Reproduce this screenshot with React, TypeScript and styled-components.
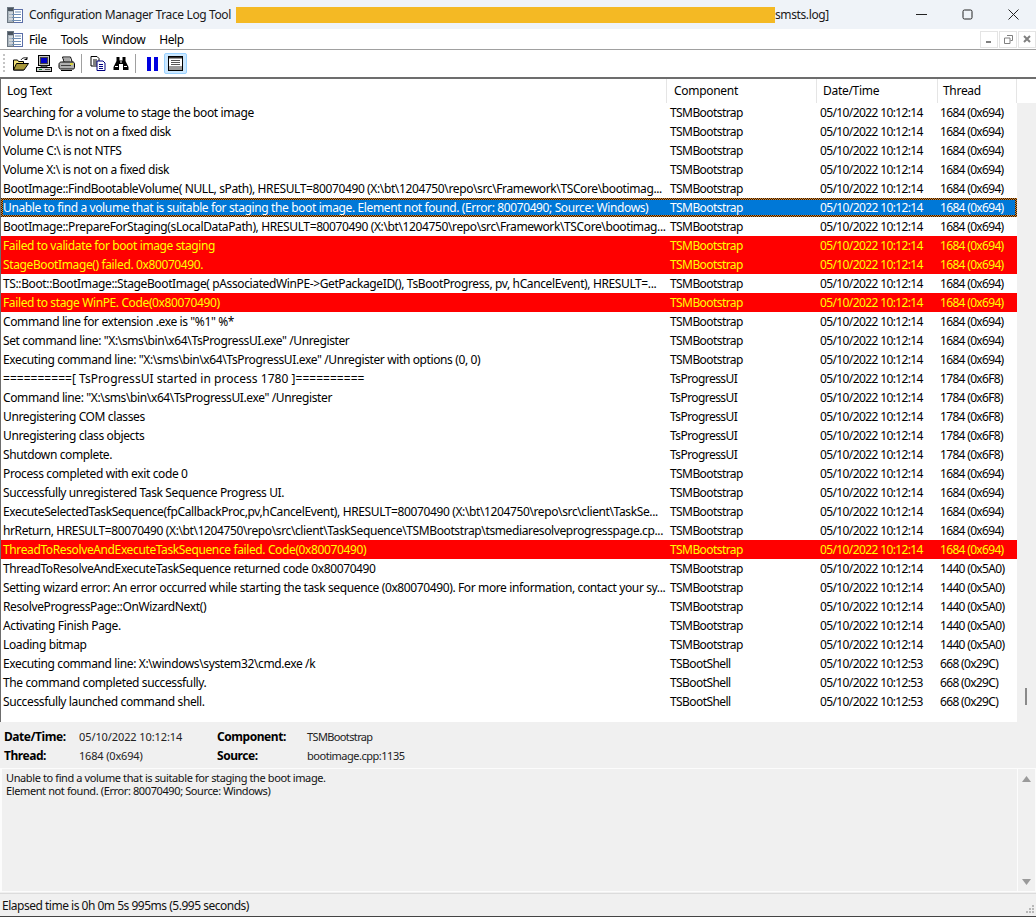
import styled, { createGlobalStyle } from 'styled-components';

const GlobalStyle = createGlobalStyle`
  html, body {
    margin: 0;
    padding: 0;
    background: #f0f0f0;
  }
`;

type Level = 'normal' | 'selected' | 'error';
type Entry = { text: string; comp: string; time: string; thread: string; level?: Level; spacing?: number };

const boot = '05/10/2022 10:12:14';
const shell = '05/10/2022 10:12:53';
const t1 = '1684 (0x694)';
const t2 = '1784 (0x6F8)';
const t3 = '1440 (0x5A0)';
const t4 = '668 (0x29C)';

const rows: Entry[] = [
  { text: 'Searching for a volume to stage the boot image', comp: 'TSMBootstrap', time: boot, thread: t1 },
  { text: 'Volume D:\\ is not on a fixed disk', comp: 'TSMBootstrap', time: boot, thread: t1 },
  { text: 'Volume C:\\ is not NTFS', comp: 'TSMBootstrap', time: boot, thread: t1 },
  { text: 'Volume X:\\ is not on a fixed disk', comp: 'TSMBootstrap', time: boot, thread: t1 },
  { text: 'BootImage::FindBootableVolume( NULL, sPath), HRESULT=80070490 (X:\\bt\\1204750\\repo\\src\\Framework\\TSCore\\bootimag...', comp: 'TSMBootstrap', time: boot, thread: t1 },
  { text: 'Unable to find a volume that is suitable for staging the boot image. Element not found. (Error: 80070490; Source: Windows)', comp: 'TSMBootstrap', time: boot, thread: t1, level: 'selected' },
  { text: 'BootImage::PrepareForStaging(sLocalDataPath), HRESULT=80070490 (X:\\bt\\1204750\\repo\\src\\Framework\\TSCore\\bootimag...', comp: 'TSMBootstrap', time: boot, thread: t1 },
  { text: 'Failed to validate for boot image staging', comp: 'TSMBootstrap', time: boot, thread: t1, level: 'error' },
  { text: 'StageBootImage() failed. 0x80070490.', comp: 'TSMBootstrap', time: boot, thread: t1, level: 'error' },
  { text: 'TS::Boot::BootImage::StageBootImage( pAssociatedWinPE->GetPackageID(), TsBootProgress, pv, hCancelEvent), HRESULT=...', comp: 'TSMBootstrap', time: boot, thread: t1 },
  { text: 'Failed to stage WinPE. Code(0x80070490)', comp: 'TSMBootstrap', time: boot, thread: t1, level: 'error' },
  { text: 'Command line for extension .exe is "%1" %*', comp: 'TSMBootstrap', time: boot, thread: t1 },
  { text: 'Set command line: "X:\\sms\\bin\\x64\\TsProgressUI.exe" /Unregister', comp: 'TSMBootstrap', time: boot, thread: t1 },
  { text: 'Executing command line: "X:\\sms\\bin\\x64\\TsProgressUI.exe" /Unregister with options (0, 0)', comp: 'TSMBootstrap', time: boot, thread: t1 },
  { text: '==========[ TsProgressUI started in process 1780 ]==========', comp: 'TsProgressUI', time: boot, thread: t2, spacing: 0.03 },
  { text: 'Command line: "X:\\sms\\bin\\x64\\TsProgressUI.exe" /Unregister', comp: 'TsProgressUI', time: boot, thread: t2 },
  { text: 'Unregistering COM classes', comp: 'TsProgressUI', time: boot, thread: t2 },
  { text: 'Unregistering class objects', comp: 'TsProgressUI', time: boot, thread: t2 },
  { text: 'Shutdown complete.', comp: 'TsProgressUI', time: boot, thread: t2 },
  { text: 'Process completed with exit code 0', comp: 'TSMBootstrap', time: boot, thread: t1 },
  { text: 'Successfully unregistered Task Sequence Progress UI.', comp: 'TSMBootstrap', time: boot, thread: t1 },
  { text: 'ExecuteSelectedTaskSequence(fpCallbackProc,pv,hCancelEvent), HRESULT=80070490 (X:\\bt\\1204750\\repo\\src\\client\\TaskSe...', comp: 'TSMBootstrap', time: boot, thread: t1 },
  { text: 'hrReturn, HRESULT=80070490 (X:\\bt\\1204750\\repo\\src\\client\\TaskSequence\\TSMBootstrap\\tsmediaresolveprogresspage.cp...', comp: 'TSMBootstrap', time: boot, thread: t1 },
  { text: 'ThreadToResolveAndExecuteTaskSequence failed. Code(0x80070490)', comp: 'TSMBootstrap', time: boot, thread: t1, level: 'error' },
  { text: 'ThreadToResolveAndExecuteTaskSequence returned code 0x80070490', comp: 'TSMBootstrap', time: boot, thread: t3 },
  { text: 'Setting wizard error: An error occurred while starting the task sequence (0x80070490). For more information, contact your sy...', comp: 'TSMBootstrap', time: boot, thread: t3 },
  { text: 'ResolveProgressPage::OnWizardNext()', comp: 'TSMBootstrap', time: boot, thread: t3 },
  { text: 'Activating Finish Page.', comp: 'TSMBootstrap', time: boot, thread: t3 },
  { text: 'Loading bitmap', comp: 'TSMBootstrap', time: boot, thread: t3 },
  { text: 'Executing command line: X:\\windows\\system32\\cmd.exe /k', comp: 'TSBootShell', time: shell, thread: t4 },
  { text: 'The command completed successfully.', comp: 'TSBootShell', time: shell, thread: t4 },
  { text: 'Successfully launched command shell.', comp: 'TSBootShell', time: shell, thread: t4 },
];

const Window = styled.div`
  width: 1036px;
  height: 917px;
  display: flex;
  flex-direction: column;
  overflow: hidden;
  background: #f0f0f0;
  font-family: 'Noto Sans', 'Open Sans', sans-serif;
  font-size: 12px;
  letter-spacing: -0.38px;
  color: #000;
`;

const TitleBar = styled.div`
  height: 29px;
  flex: none;
  display: flex;
  align-items: center;
  background: #eff3f8;
  padding-left: 7px;
  gap: 6px;
`;

const TitleText = styled.span`
  display: flex;
  align-items: center;
  color: #1a1a1a;
`;

const Redacted = styled.span`
  display: inline-block;
  width: 539px;
  height: 16px;
  margin-left: 5px;
  background: #f4b924;
`;

const WindowButtons = styled.div`
  margin-left: auto;
  display: flex;
  align-items: center;
  height: 100%;
`;

const WindowButton = styled.div`
  width: 46px;
  height: 29px;
  display: flex;
  align-items: center;
  justify-content: center;
`;

const MenuBar = styled.div`
  height: 20px;
  flex: none;
  display: flex;
  align-items: center;
  background: #fff;
  padding-left: 7px;
  border-bottom: 1px solid #a0a0a0;
`;

const MenuItem = styled.span`
  margin-right: 14px;
  &:first-of-type {
    margin-left: 6px;
  }
`;

const MdiButtons = styled.div`
  margin-left: auto;
  display: flex;
  gap: 1px;
`;

const MdiButton = styled.div`
  width: 18px;
  height: 17px;
  border: 1px solid #e4e4e4;
  box-sizing: border-box;
  display: flex;
  align-items: center;
  justify-content: center;
`;

const ToolBar = styled.div`
  height: 29px;
  flex: none;
  display: flex;
  align-items: center;
  background: #fff;
  padding-left: 3px;
  border-bottom: 2px solid #6d6d6d;
  box-sizing: border-box;
`;

const Grip = styled.div`
  width: 2px;
  height: 20px;
  margin-right: 4px;
  background: repeating-linear-gradient(to bottom, #c4c4c4 0 2px, transparent 2px 4px);
`;

const ToolButton = styled.div<{ $active?: boolean }>`
  width: 23px;
  height: 21px;
  display: flex;
  align-items: center;
  justify-content: center;
  box-sizing: border-box;
  border-radius: 2px;
  ${(p) => p.$active && 'background: #cce8ff; border: 1px solid #99d1ff;'}
`;

const ToolSep = styled.div<{ $after: number }>`
  width: 1px;
  height: 19px;
  margin: 0 ${(p) => p.$after}px 0 3px;
  background: #a0a0a0;
`;

const LogArea = styled.div`
  height: 643px;
  flex: none;
  display: grid;
  grid-template-columns: 1017px 19px;
  background: #f0f0f0;
`;

const LogList = styled.div`
  background: #fff;
  display: flex;
  flex-direction: column;
  border-left: 1px solid #6d6d6d;
`;

const columns = 'grid-template-columns: 666px 150px 121px 79px;';

const HeaderRow = styled.div`
  display: grid;
  ${columns}
  height: 24px;
  flex: none;
`;

const HeaderCell = styled.div<{ $indent: number }>`
  display: flex;
  align-items: center;
  padding: 0 0 2px ${(p) => p.$indent}px;
  border-right: 1px solid #e5e5e5;
  letter-spacing: -0.3px;
`;

const selectedBackground = `
  background:
    linear-gradient(#0078d7, #0078d7) center / calc(100% - 4px) calc(100% - 4px) no-repeat,
    repeating-conic-gradient(#e8871e 0 25%, #1a1a1a 0 50%) 0 0 / 2px 2px;
`;

const Row = styled.div<{ $level: Level }>`
  display: grid;
  ${columns}
  height: 19px;
  line-height: 19px;
  flex: none;
  white-space: nowrap;
  background: ${(p) => (p.$level === 'error' ? '#ff0000' : '#fff')};
  color: ${(p) => (p.$level === 'error' ? '#ffff00' : p.$level === 'selected' ? '#fff' : '#000')};
  ${(p) => p.$level === 'selected' && selectedBackground}
`;

const Cell = styled.div<{ $indent: number; $spacing?: number }>`
  padding-left: ${(p) => p.$indent}px;
  overflow: hidden;
  ${(p) => p.$spacing !== undefined && `letter-spacing: ${p.$spacing}px;`}
`;

const ScrollTrack = styled.div`
  position: relative;
  background: #f0f0f0;
  border-top: 24px solid #fff;
`;

const ScrollThumb = styled.div`
  position: absolute;
  right: 9px;
  top: 585px;
  width: 2px;
  height: 17px;
  background: #8a8a8a;
`;

const Details = styled.div`
  height: 46px;
  flex: none;
  display: grid;
  grid-template-columns: 75px 138px 90px 1fr;
  grid-auto-rows: 19px;
  align-items: center;
  padding: 5px 0 0 4px;
  box-sizing: border-box;
  background: #f0f0f0;
`;

const DetailLabel = styled.span`
  font-weight: 700;
  letter-spacing: -0.45px;
`;

const DetailValue = styled.span<{ $spacing: number }>`
  color: #222;
  font-size: 11px;
  letter-spacing: ${(p) => p.$spacing}px;
`;

const MessageBox = styled.div`
  height: 124px;
  flex: none;
  display: flex;
  background: #f0f0f0;
  border: 1px solid #fcfcfc;
  border-left-width: 2px;
  box-sizing: border-box;
`;

const MessageText = styled.div`
  flex: 1;
  padding: 2px 0 0 4px;
  font-size: 11px;
  letter-spacing: -0.39px;
  line-height: 13px;
  color: #111;
`;

const MessageScroll = styled.div`
  width: 18px;
  display: flex;
  flex-direction: column;
  justify-content: space-between;
  align-items: center;
  padding: 7px 0 6px;
  box-sizing: border-box;
  border-left: 1px solid #fcfcfc;
`;

const StatusBar = styled.div`
  flex: 1;
  display: flex;
  align-items: center;
  padding: 1px 0 0 2px;
  border-top: 1px solid #dcdcdc;
  border-bottom: 1px solid #444;
  margin-top: 1px;
  letter-spacing: -0.49px;
  color: #111;
  position: relative;
`;

const ResizeGrip = styled.svg`
  position: absolute;
  right: 1px;
  bottom: 1px;
`;

const LogIcon = () => (
  <svg width="16" height="16" viewBox="0 0 16 16">
    <rect x="5.500" y="2.500" width="10" height="13" fill="#fff" stroke="#5a6ea8" />
    <rect x="0.500" y="0.500" width="6" height="15" fill="#a9b4bd" stroke="#6c7782" />
    <rect x="1" y="1" width="5" height="3" fill="#4a545e" />
    <path d="M2 6h4M2 9h4M2 12h4" stroke="#f4f6f8" />
    <path d="M5 7.500h9M5 10.500h9M5 13.500h9M8 5h6" stroke="#6f8fb5" />
  </svg>
);

const FolderIcon = () => (
  <svg width="16" height="14" viewBox="0 0 16 14">
    <path d="M.5 3h4l1 1.500h5V13H.5z" fill="#f2e27a" stroke="#000" />
    <path d="M.5 13l3-6.500h12L11 13z" fill="#a8983a" stroke="#000" />
    <path d="M8 3c1-2 4-3 6-1.500M14 0v2.500h-2.500" fill="none" stroke="#000" />
  </svg>
);

const ComputerIcon = () => (
  <svg width="16" height="17" viewBox="0 0 16 17">
    <rect x="2.500" y="0.500" width="11" height="10" fill="#c4c4c4" stroke="#000" />
    <rect x="4.500" y="2.500" width="7" height="6" fill="#0000c8" stroke="#444" />
    <path d="M5 10.500h6v1.500H5z" fill="#808080" stroke="#000" strokeWidth=".6" />
    <rect x="0.500" y="12.500" width="15" height="4" fill="#d0d0d0" stroke="#000" />
    <path d="M3 14.500h3" stroke="#0a8a2a" />
    <path d="M9 14.500h5" stroke="#555" />
  </svg>
);

const PrinterIcon = () => (
  <svg width="17" height="16" viewBox="0 0 17 16">
    <path d="M4.500 1h8l2 6h-8z" fill="#fff" stroke="#000" />
    <path d="M6 3h6M6.500 5h6" stroke="#555" />
    <path d="M1 8.500c0-1.500 1-2.500 2.500-2.500H15c1 0 1.500 1 1.500 2v3.500c0 1-.5 1.500-1.500 1.500H2.500C1.500 13 1 12 1 11z" fill="#b0b0b0" stroke="#000" />
    <path d="M3 9.500h10" stroke="#404040" />
    <path d="M12 8h3" stroke="#e8e020" strokeWidth="1.500" />
    <path d="M3 14.500h11" stroke="#000" />
  </svg>
);

const CopyIcon = () => (
  <svg width="16" height="15" viewBox="0 0 16 15">
    <path d="M1 .5h6l2 2V10H1z" fill="#fff" stroke="#000" />
    <path d="M3 4h4M3 6h4M3 8h4" stroke="#000" />
    <path d="M7 5h6l2 2v7.500H7z" fill="#fff" stroke="#000080" />
    <path d="M9 8.500h4M9 10.500h4M9 12.500h4" stroke="#000080" />
  </svg>
);

const BinocularsIcon = () => (
  <svg width="16" height="15" viewBox="0 0 16 15">
    <path d="M3.500 1h3v3.500h3V1h3v4l3 6v3H10V8H6v6H.5v-3l3-6z" fill="#000" />
    <path d="M2 10.500h3M11 10.500h3M7 6h2" stroke="#fff" />
  </svg>
);

const PauseIcon = () => (
  <svg width="11" height="14" viewBox="0 0 11 14">
    <path d="M0 0h4v14H0zM7 0h4v14H7z" fill="#0000e0" />
  </svg>
);

const DetailsIcon = () => (
  <svg width="15" height="15" viewBox="0 0 15 15">
    <rect x="0.500" y="0.500" width="14" height="14" fill="#fff" stroke="#000" />
    <rect x="1" y="1" width="13" height="1.500" fill="#333" />
    <path d="M3 4.500h9M3 6.500h9M3 8.500h9" stroke="#555" />
    <rect x="1" y="10" width="13" height="4" fill="#999" />
  </svg>
);

const Triangle = ({ down }: { down?: boolean }) => (
  <svg width="9" height="6" viewBox="0 0 9 6">
    <path d={down ? 'M0 0h9L4.500 6z' : 'M4.500 0L9 6H0z'} fill="#9a9a9a" />
  </svg>
);

const App = () => (
  <Window>
    <GlobalStyle />
    <TitleBar>
      <LogIcon />
      <TitleText>
        Configuration Manager Trace Log Tool
        <Redacted />
        smsts.log]
      </TitleText>
      <WindowButtons>
        <WindowButton>
          <svg width="11" height="11" viewBox="0 0 11 11"><path d="M0 5.500h11" stroke="#222" /></svg>
        </WindowButton>
        <WindowButton>
          <svg width="11" height="11" viewBox="0 0 11 11"><rect x="1" y="1" width="9" height="9" rx="1.500" fill="none" stroke="#222" /></svg>
        </WindowButton>
        <WindowButton>
          <svg width="11" height="11" viewBox="0 0 11 11"><path d="M.5.500l10 10M10.500.500l-10 10" stroke="#222" /></svg>
        </WindowButton>
      </WindowButtons>
    </TitleBar>
    <MenuBar>
      <LogIcon />
      <MenuItem>File</MenuItem>
      <MenuItem>Tools</MenuItem>
      <MenuItem>Window</MenuItem>
      <MenuItem>Help</MenuItem>
      <MdiButtons>
        <MdiButton>
          <svg width="8" height="8" viewBox="0 0 8 8"><path d="M1 7h5" stroke="#808080" strokeWidth="2" /></svg>
        </MdiButton>
        <MdiButton>
          <svg width="9" height="9" viewBox="0 0 9 9"><path d="M3 .5h5.500v5H6.500M.5 3h5.500v5.500H.5z" fill="none" stroke="#808080" /></svg>
        </MdiButton>
        <MdiButton>
          <svg width="8" height="8" viewBox="0 0 8 8"><path d="M1 1l6 6M7 1L1 7" stroke="#808080" strokeWidth="2" /></svg>
        </MdiButton>
      </MdiButtons>
    </MenuBar>
    <ToolBar>
      <Grip />
      <ToolButton><FolderIcon /></ToolButton>
      <ToolButton><ComputerIcon /></ToolButton>
      <ToolButton><PrinterIcon /></ToolButton>
      <ToolSep $after={4} />
      <ToolButton><CopyIcon /></ToolButton>
      <ToolButton><BinocularsIcon /></ToolButton>
      <ToolSep $after={5} />
      <ToolButton><PauseIcon /></ToolButton>
      <ToolButton $active><DetailsIcon /></ToolButton>
    </ToolBar>
    <LogArea>
      <LogList>
        <HeaderRow>
          <HeaderCell $indent={6}>Log Text</HeaderCell>
          <HeaderCell $indent={7}>Component</HeaderCell>
          <HeaderCell $indent={6}>Date/Time</HeaderCell>
          <HeaderCell $indent={5}>Thread</HeaderCell>
        </HeaderRow>
        {rows.map((r, i) => (
          <Row key={i} $level={r.level ?? 'normal'}>
            <Cell $indent={2} $spacing={r.spacing}>{r.text}</Cell>
            <Cell $indent={3} $spacing={-0.58}>{r.comp}</Cell>
            <Cell $indent={3} $spacing={-0.62}>{r.time}</Cell>
            <Cell $indent={2} $spacing={-0.67}>{r.thread}</Cell>
          </Row>
        ))}
      </LogList>
      <ScrollTrack>
        <ScrollThumb />
      </ScrollTrack>
    </LogArea>
    <Details>
      <DetailLabel>Date/Time:</DetailLabel>
      <DetailValue $spacing={-0.1}>05/10/2022 10:12:14</DetailValue>
      <DetailLabel>Component:</DetailLabel>
      <DetailValue $spacing={-0.63}>TSMBootstrap</DetailValue>
      <DetailLabel>Thread:</DetailLabel>
      <DetailValue $spacing={-0.17}>1684 (0x694)</DetailValue>
      <DetailLabel>Source:</DetailLabel>
      <DetailValue $spacing={-0.48}>bootimage.cpp:1135</DetailValue>
    </Details>
    <MessageBox>
      <MessageText>
        Unable to find a volume that is suitable for staging the boot image.
        <br />
        Element not found. (Error: 80070490; Source: Windows)
      </MessageText>
      <MessageScroll>
        <Triangle />
        <Triangle down />
      </MessageScroll>
    </MessageBox>
    <StatusBar>
      Elapsed time is 0h 0m 5s 995ms (5.995 seconds)
      <ResizeGrip width="12" height="12" viewBox="0 0 12 12">
        <path d="M9 2h2v2H9zM6 5h2v2H6zM9 5h2v2H9zM3 8h2v2H3zM6 8h2v2H6zM9 8h2v2H9z" fill="#b8b8b8" />
      </ResizeGrip>
    </StatusBar>
  </Window>
);

export default App;
